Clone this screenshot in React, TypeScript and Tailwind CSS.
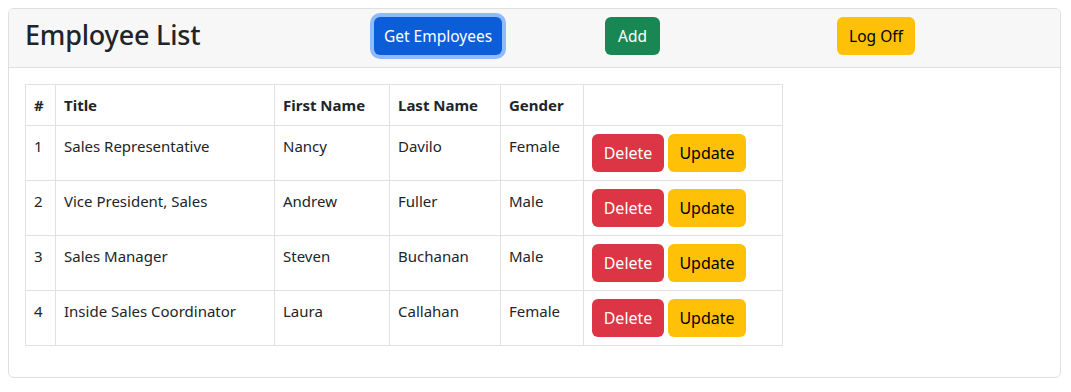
import React from 'react';

const employees = [
  { id: 1, title: 'Sales Representative', first: 'Nancy', last: 'Davilo', gender: 'Female' },
  { id: 2, title: 'Vice President, Sales', first: 'Andrew', last: 'Fuller', gender: 'Male' },
  { id: 3, title: 'Sales Manager', first: 'Steven', last: 'Buchanan', gender: 'Male' },
  { id: 4, title: 'Inside Sales Coordinator', first: 'Laura', last: 'Callahan', gender: 'Female' },
];

const font = { fontFamily: '"Noto Sans", "Open Sans", sans-serif' };

export default function App() {
  return (
    <div className="p-2 bg-white text-[#212529] text-[15px] leading-6" style={font}>
      <div className="w-[1053px] border border-[#dfdfdf] rounded-md overflow-hidden">
        {/* Card header */}
        <div className="h-[59px] bg-[#f7f7f7] border-b border-[#dfdfdf] flex items-start pt-2 px-4">
          <h2 className="w-[349px] h-[38px] flex items-center text-[27px] font-medium tracking-[-0.2px] -mt-[1px]">
            Employee List
          </h2>
          <button className="w-[128px] h-[38px] rounded-md bg-[#0b5ed7] text-white ring-4 ring-[#8fbafc] text-center text-[15.5px]">
            Get Employees
          </button>
          <button className="ml-[103px] w-[55px] h-[38px] rounded-md bg-[#198754] text-white text-center text-[15.5px]">
            Add
          </button>
          <button className="ml-[177px] w-[78px] h-[38px] rounded-md bg-[#ffc107] text-black text-center text-[15.5px]">
            Log Off
          </button>
        </div>

        {/* Card body */}
        <div className="p-4 pb-[31px]">
          <table className="w-[757px] table-fixed border-collapse">
            <colgroup>
              <col className="w-[30px]" />
              <col className="w-[219px]" />
              <col className="w-[115px]" />
              <col className="w-[111px]" />
              <col className="w-[83px]" />
              <col className="w-[199px]" />
            </colgroup>
            <thead>
              <tr className="text-left">
                <th className="border border-[#dee2e6] px-2 py-2 font-bold">#</th>
                <th className="border border-[#dee2e6] px-2 py-2 font-bold">Title</th>
                <th className="border border-[#dee2e6] px-2 py-2 font-bold">First Name</th>
                <th className="border border-[#dee2e6] px-2 py-2 font-bold">Last Name</th>
                <th className="border border-[#dee2e6] px-2 py-2 font-bold">Gender</th>
                <th className="border border-[#dee2e6] px-2 py-2"></th>
              </tr>
            </thead>
            <tbody>
              {employees.map(e => (
                <tr key={e.id} className="align-top">
                  <td className="border border-[#dee2e6] px-2 py-2">{e.id}</td>
                  <td className="border border-[#dee2e6] px-2 py-2 whitespace-nowrap">{e.title}</td>
                  <td className="border border-[#dee2e6] px-2 py-2">{e.first}</td>
                  <td className="border border-[#dee2e6] px-2 py-2">{e.last}</td>
                  <td className="border border-[#dee2e6] px-2 py-2">{e.gender}</td>
                  <td className="border border-[#dee2e6] px-2 py-2">
                    <div className="flex gap-1">
                      <button className="w-[72px] h-[38px] rounded-md bg-[#dc3545] text-white text-[16px]">Delete</button>
                      <button className="w-[78px] h-[38px] rounded-md bg-[#ffc107] text-black text-[16px]">Update</button>
                    </div>
                  </td>
                </tr>
              ))}
            </tbody>
          </table>
        </div>
      </div>
    </div>
  );
}
